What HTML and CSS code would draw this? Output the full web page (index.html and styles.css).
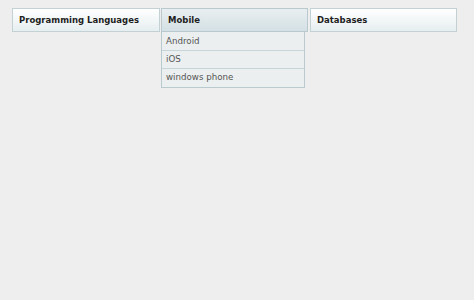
FILE: index.html
```html
<!DOCTYPE html>
<html lang="en">
<head>
    <meta charset="UTF-8">
    <title>Menu</title>
    <link rel="stylesheet" href="styles.css">
</head>
<body>

<div class="menubar">
    <div class="menu-item">
        <div class="menu-head">Programming Languages</div>
    </div>
    <div class="menu-item open">
        <div class="menu-head">Mobile</div>
        <div class="submenu">
            <div class="sub-item">Android</div>
            <div class="sub-item">iOS</div>
            <div class="sub-item">windows phone</div>
        </div>
    </div>
    <div class="menu-item">
        <div class="menu-head">Databases</div>
    </div>
</div>

</body>
</html>
```

FILE: styles.css
```css
body {
    margin: 0;
    background: #eeeeee;
    font-family: "DejaVu Sans", Verdana, sans-serif;
}

.menubar {
    padding: 8px 0 0 12px;
    display: flex;
    align-items: flex-start;
}

.menu-item {
    width: 147px;
}

.menu-item:first-child {
    width: 148px;
    margin-right: 1px;
}

.menu-item.open {
    margin-right: 2px;
}

.menu-head {
    box-sizing: border-box;
    height: 24px;
    padding: 6px 0 0 6px;
    font-size: 8.5px;
    font-weight: bold;
    color: #1e1e1e;
    white-space: nowrap;
    border: 1px solid #c3d0d4;
    background: linear-gradient(#ffffff, #e6eef0);
}

.open .menu-head {
    background: linear-gradient(#e9eff1, #d3e0e4);
    border-color: #b9c9ce;
}

.submenu {
    width: 142px;
    padding-top: 1px;
    background: #ebeff0;
    border: 1px solid #b9cacf;
    border-top: none;
}

.sub-item {
    height: 17px;
    line-height: 17px;
    padding-left: 4px;
    font-size: 8.7px;
    color: #555555;
    border-bottom: 1px solid #c5d5d9;
}

.sub-item:last-child {
    height: 18px;
    border-bottom: none;
}
```
